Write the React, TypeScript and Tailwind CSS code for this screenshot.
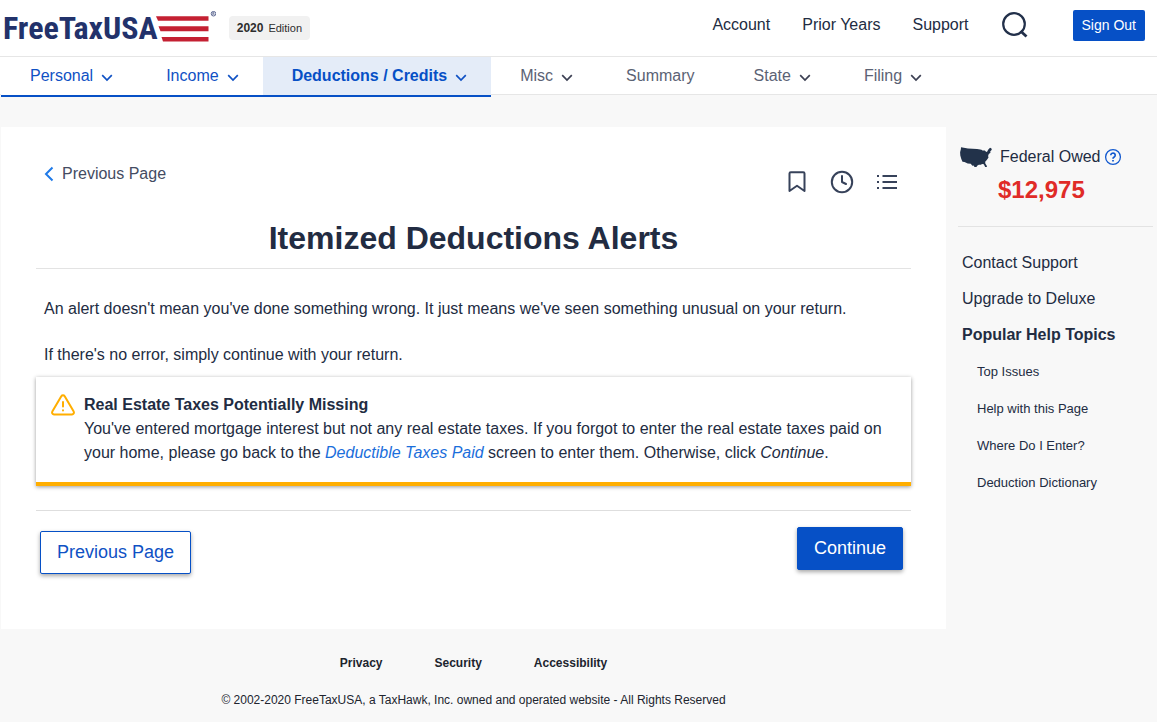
import React from "react";

type NavItem = { label: string; menu: boolean; state: "done" | "current" | "todo" };

const navItems: NavItem[] = [
  { label: "Personal", menu: true, state: "done" },
  { label: "Income", menu: true, state: "done" },
  { label: "Deductions / Credits", menu: true, state: "current" },
  { label: "Misc", menu: true, state: "todo" },
  { label: "Summary", menu: false, state: "todo" },
  { label: "State", menu: true, state: "todo" },
  { label: "Filing", menu: true, state: "todo" },
];

const navStyles = {
  done: "border-b-2 border-[#0650c6] bg-white text-[#0f51c4]",
  current: "border-b-2 border-[#0650c6] bg-[#e4ecf8] font-bold text-[#0650c6]",
  todo: "border-b-2 border-transparent text-[#5b6274]",
};

const helpTopics = ["Top Issues", "Help with this Page", "Where Do I Enter?", "Deduction Dictionary"];

function Chevron({ dark }: { dark: boolean }) {
  return (
    <svg width="12" height="8" viewBox="0 0 12 8" fill="none" stroke={dark ? "#3b3f52" : "#0f51c4"} strokeWidth="1.7" className="mt-1" aria-hidden="true">
      <path d="M1.2 1.2 6 6l4.800-4.800" />
    </svg>
  );
}

function Logo() {
  return (
    <a href="#home" aria-label="FreeTaxUSA home" className="flex items-center">
      <span className="font-['Roboto_Condensed','Liberation_Sans_Narrow','Liberation_Sans',sans-serif] text-[32px] leading-8 font-bold text-[#22326b]">FreeTaxUSA</span>
      <svg width="60" height="34" viewBox="0 0 60 34" className="-ml-0.5" aria-hidden="true">
        <g fill="#c42032">
          <path d="M0 5.300h52.500v4.500H2z" />
          <path d="M2.500 15.300h50v5H4.500z" />
          <path d="M5.500 26h47v4.500H7z" />
        </g>
        <circle cx="57.500" cy="2.700" r="2.300" fill="none" stroke="#22326b" strokeWidth=".7" />
        <path d="M56.800 4.100V1.400h1q.8.700 0 1.400h-1m.8 0 .9 1.300" fill="none" stroke="#22326b" strokeWidth=".5" />
      </svg>
    </a>
  );
}

function UsMap() {
  return (
    <svg width="32" height="20" viewBox="0 0 32 20" fill="#22324a" aria-hidden="true">
      <path d="M1 .3 8 1.500l9 .5 1.700.2 2.800.6 1 .6 2.300.2 1.500 1.300 1.200-.6.400-1.400L30 .8l1.300.4.500 1.500-1.600 1.800.3 1.200-1.700 1.300-.7 2 .4 1.500-1.700 2.500-1.600 1.700.1 1.700 1.600 2.600-.2 1.500-1.400-.3-1.500-3-1.700-.1-1.300.7-2-.1-2 1.200-.2 2.300-1.800-.7-1.200-2.100-1.200.3-1.700-2-3-.2-3.200-1.400-2-.3L1.300 12 .3 8.500.1 5.300.9 2z" />
    </svg>
  );
}

export default function App() {
  return (
    <div className="min-h-screen bg-[#f8f8f8] font-['Liberation_Sans',Arial,sans-serif] text-base text-[#222c42]">
      <header className="flex h-14 items-center bg-white pr-3 pl-[3px]">
        <Logo />
        <span className="ml-[13px] flex items-center gap-[5px] rounded bg-[#f1f1f1] px-2 py-1 text-xs leading-4 text-[#2d2d2d]">
          <b>2020</b>
          <span className="text-[11px]">Edition</span>
        </span>
        <nav aria-label="Account" className="ml-auto flex items-center pb-1.5">
          <a href="#account" className="mr-8">Account</a>
          <a href="#years" className="mr-8">Prior Years</a>
          <a href="#support" className="mr-8">Support</a>
          <button type="button" aria-label="Search" className="mr-11">
            <svg width="28" height="28" viewBox="0 0 28 28" fill="none" stroke="#22304a" strokeWidth="2.200" aria-hidden="true">
              <circle cx="13" cy="13" r="10.800" />
              <path d="m19.500 20 6 5.500" strokeWidth="2.800" />
            </svg>
          </button>
          <button type="button" className="rounded-xs bg-[#0650c6] px-[9px] py-1.5 text-sm leading-[19px] text-white">Sign Out</button>
        </nav>
      </header>

      <nav aria-label="Return sections" className="h-[39px] border-y border-[#e6e6e6] bg-white pl-px">
        <ul className="flex">
          {navItems.map((item) => (
            <li key={item.label}>
              <button type="button" className={`flex h-10 items-center gap-2 pl-[29px] ${item.menu ? "pr-6" : "pr-[30px]"} ${navStyles[item.state]}`}>
                {item.label}
                {item.menu && <Chevron dark={item.state === "todo"} />}
              </button>
            </li>
          ))}
        </ul>
      </nav>

      <div className="flex pt-8 pl-px">
        <div className="min-w-0 flex-1">
          <main className="bg-white px-[35px] pt-[35px] pb-[55px]">
            <div className="flex justify-between">
              <a href="#previous" className="flex h-6 items-center gap-2 pl-2 text-[#444c62]">
                <svg width="10" height="16" viewBox="0 0 10 16" fill="none" stroke="#1f7ae8" strokeWidth="2" aria-hidden="true">
                  <path d="M8.500 1.500 2 8l6.500 6.500" />
                </svg>
                Previous Page
              </a>
              <div className="flex items-center gap-[21px] pt-2 pr-3">
                <button type="button" aria-label="Bookmark">
                  <svg width="24" height="24" viewBox="0 0 24 24" fill="none" stroke="#37425a" strokeWidth="2" strokeLinejoin="round" aria-hidden="true">
                    <path d="M4.500 21V3.500q0-1.300 1.300-1.300h12.400q1.300 0 1.300 1.300V21L12 15.800z" />
                  </svg>
                </button>
                <button type="button" aria-label="History">
                  <svg width="24" height="24" viewBox="0 0 24 24" fill="none" stroke="#37425a" strokeWidth="2" strokeLinecap="round" strokeLinejoin="round" aria-hidden="true">
                    <circle cx="12" cy="12" r="10.200" />
                    <path d="M12 6v6l4 2" />
                  </svg>
                </button>
                <button type="button" aria-label="Outline">
                  <svg width="24" height="24" viewBox="0 0 24 24" fill="none" stroke="#37425a" strokeWidth="2" aria-hidden="true">
                    <path d="M7.500 6H22M7.500 12H22M7.500 18H22M2 6h2M2 12h2M2 18h2" />
                  </svg>
                </button>
              </div>
            </div>

            <h1 className="mt-6 border-b border-[#e3e3e3] pb-2.5 text-center text-[32px] leading-10 font-bold">Itemized Deductions Alerts</h1>

            <p className="mt-7 px-2 leading-6">An alert doesn't mean you've done something wrong. It just means we've seen something unusual on your return.</p>
            <p className="mt-[22px] px-2 leading-6">If there's no error, simply continue with your return.</p>

            <section className="mt-2.5 flex gap-[9px] border-b-4 border-[#ffae00] bg-white px-[15px] pt-4 pb-[17px] shadow-[0_1px_4px_rgba(0,0,0,0.4)]">
              <svg width="24" height="24" viewBox="0 0 24 24" fill="none" stroke="#ffae00" strokeWidth="2" strokeLinecap="round" strokeLinejoin="round" className="shrink-0" aria-hidden="true">
                <path d="M10.300 3.200 1.300 18.600A2 2 0 0 0 3 21.500h18a2 2 0 0 0 1.700-2.900L13.700 3.200a2 2 0 0 0-3.400 0z" />
                <path d="M12 9v4.500M12 17.300v.2" />
              </svg>
              <div className="flex-1 leading-6">
                <h2 className="font-bold">Real Estate Taxes Potentially Missing</h2>
                <p>
                  You've entered mortgage interest but not any real estate taxes. If you forgot to enter the real estate taxes paid on your home, please go back to the{" "}
                  <a href="#taxes" className="text-[#1a6edb] italic">Deductible Taxes Paid</a> screen to enter them. Otherwise, click <i>Continue</i>.
                </p>
              </div>
            </section>

            <div className="mt-6 flex items-start justify-between border-t border-[#dedede] pt-4 pr-2 pl-1">
              <button type="button" className="mt-1 rounded-xs border border-[#0650c6] bg-white px-4 py-2 text-lg leading-[25px] text-[#0f51c4] shadow-[0_2px_4px_rgba(0,0,0,0.35)]">Previous Page</button>
              <button type="button" className="rounded-xs border border-[#0650c6] bg-[#0650c6] px-4 py-2 text-lg leading-[25px] text-white shadow-[0_2px_4px_rgba(0,0,0,0.35)]">Continue</button>
            </div>
          </main>

          <footer className="pt-6 text-center text-xs text-[#20242e]">
            <div className="flex justify-center gap-[52px] leading-5 font-bold">
              <a href="#privacy">Privacy</a>
              <a href="#security">Security</a>
              <a href="#accessibility">Accessibility</a>
            </div>
            <p className="mt-[17px] leading-5">© 2002-2020 FreeTaxUSA, a TaxHawk, Inc. owned and operated website - All Rights Reserved</p>
          </footer>
        </div>

        <aside className="w-[211px] shrink-0 pr-1 pl-3">
          <div className="border-b border-[#e3e3e3] pt-[18px] pb-5">
            <div className="flex items-center pl-0.5 leading-6">
              <UsMap />
              <span className="ml-2 whitespace-nowrap">Federal Owed</span>
              <button type="button" aria-label="About federal owed" className="ml-[3px]">
                <svg width="18" height="18" viewBox="0 0 18 18" fill="none" stroke="#1259cf" strokeWidth="1.300" aria-hidden="true">
                  <circle cx="9" cy="9" r="7.400" />
                  <path d="M6.800 7.300a2.200 2.200 0 1 1 3.400 1.800Q9 9.800 9 10.800M9 12v1.400" strokeWidth="1.700" />
                </svg>
              </button>
            </div>
            <p className="mt-[5px] pl-10 text-2xl leading-8 font-bold text-[#e02b27]">$12,975</p>
          </div>
          <ul className="pt-[18px] pl-1 leading-9">
            <li><a href="#contact">Contact Support</a></li>
            <li><a href="#upgrade">Upgrade to Deluxe</a></li>
          </ul>
          <h2 className="pl-1 leading-9 font-bold">Popular Help Topics</h2>
          <ul className="pl-[19px] text-[13px] leading-[37px]">
            {helpTopics.map((topic) => (
              <li key={topic}><a href="#help">{topic}</a></li>
            ))}
          </ul>
        </aside>
      </div>
    </div>
  );
}
